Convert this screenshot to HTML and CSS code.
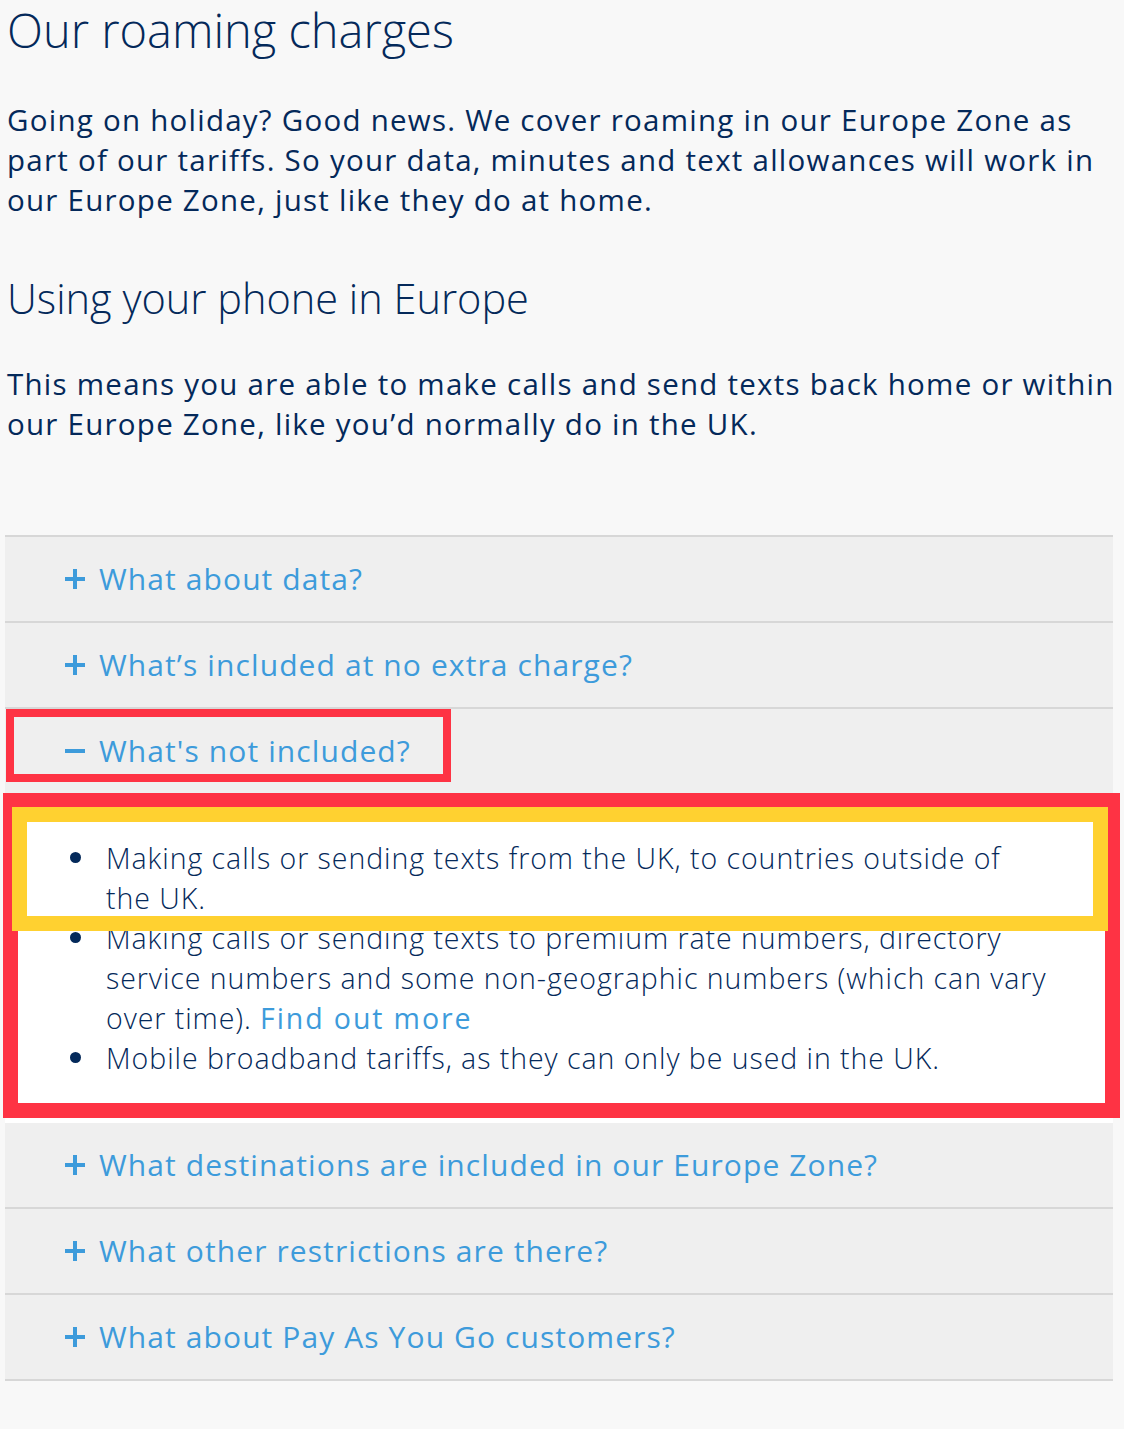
FILE: index.html
```html
<!DOCTYPE html>
<html lang="en">
<head>
<meta charset="utf-8">
<title>Our roaming charges</title>
<link rel="stylesheet" href="styles.css">
</head>
<body>
<main class="page">
  <h1 class="title">Our roaming charges</h1>
  <p class="lead">Going on holiday? Good news. We cover roaming in our Europe Zone as part of our tariffs. So your data, minutes and text allowances will work in our Europe Zone, just like they do at home.</p>
  <h2 class="subtitle">Using your phone in Europe</h2>
  <p class="lead lead-2">This means you are able to make calls and send texts back home or within our Europe Zone, like you’d normally do in the UK.</p>

  <section class="accordion">
    <div class="acc-item first">
      <div class="acc-head">
        <svg class="acc-icon" viewBox="0 0 20 20" aria-hidden="true"><path d="M10 0V20M0 10H20"/></svg>
        <span class="acc-title">What about data?</span>
      </div>
    </div>
    <div class="acc-item">
      <div class="acc-head">
        <svg class="acc-icon" viewBox="0 0 20 20" aria-hidden="true"><path d="M10 0V20M0 10H20"/></svg>
        <span class="acc-title">What’s included at no extra charge?</span>
      </div>
    </div>
    <div class="acc-item open">
      <div class="acc-head">
        <svg class="acc-icon" viewBox="0 0 20 20" aria-hidden="true"><path d="M0 10H20"/></svg>
        <span class="acc-title">What's not included?</span>
        <span class="mark mark-head"></span>
      </div>
      <div class="acc-panel">
        <ul class="acc-list">
          <li><span class="li-text">Making calls or sending texts from the UK, to countries outside of the UK.</span></li>
          <li><span class="li-text">Making calls or sending texts to premium rate numbers, directory service numbers and some non-geographic numbers (which can vary over time). <a class="link" href="#">Find out more</a></span></li>
          <li><span class="li-text">Mobile broadband tariffs, as they can only be used in the UK.</span></li>
        </ul>
        <span class="mark mark-panel"></span>
        <span class="mark mark-first"></span>
      </div>
    </div>
    <div class="acc-item">
      <div class="acc-head">
        <svg class="acc-icon" viewBox="0 0 20 20" aria-hidden="true"><path d="M10 0V20M0 10H20"/></svg>
        <span class="acc-title">What destinations are included in our Europe Zone?</span>
      </div>
    </div>
    <div class="acc-item">
      <div class="acc-head">
        <svg class="acc-icon" viewBox="0 0 20 20" aria-hidden="true"><path d="M10 0V20M0 10H20"/></svg>
        <span class="acc-title">What other restrictions are there?</span>
      </div>
    </div>
    <div class="acc-item">
      <div class="acc-head">
        <svg class="acc-icon" viewBox="0 0 20 20" aria-hidden="true"><path d="M10 0V20M0 10H20"/></svg>
        <span class="acc-title">What about Pay As You Go customers?</span>
      </div>
    </div>
  </section>
</main>
</body>
</html>
```

FILE: styles.css
```css
* { box-sizing: border-box; }

html, body {
  margin: 0;
  padding: 0;
  background: #f8f8f8;
}

body {
  font-family: "Open Sans", "Noto Sans", "DejaVu Sans", sans-serif;
  color: #04295a;
  width: 1124px;
  min-height: 1429px;
}

.page {
  padding: 0 11px 48px 5px;
}

.title {
  margin: 0;
  padding-left: 2px;
  font-size: 47px;
  font-weight: 300;
  line-height: 60px;
}

.lead {
  margin: 40px -11px 0 0;
  padding-left: 2px;
  font-size: 29.5px;
  font-weight: 400;
  letter-spacing: 1.25px;
  line-height: 40px;
}

.subtitle {
  margin: 50px 0 0;
  padding-left: 2px;
  font-size: 41.5px;
  font-weight: 300;
  line-height: 56px;
}

.lead-2 {
  margin-top: 38px;
}

.accordion {
  margin-top: 91px;
  width: 1108px;
  border-top: 2px solid #d7d7d7;
}

.acc-item {
  background: #efefef;
  border-bottom: 2px solid #d7d7d7;
}

.acc-head {
  position: relative;
  display: flex;
  align-items: center;
  height: 84px;
  padding-left: 60px;
  gap: 14px;
}

.acc-icon {
  width: 20px;
  height: 20px;
  flex: none;
  fill: none;
  stroke: #3d9bdb;
  stroke-width: 4;
}

.acc-title {
  font-size: 30px;
  letter-spacing: 1.1px;
  line-height: 40px;
  color: #3d9bdb;
}

.open .acc-head {
  border-bottom: 2px solid #d7d7d7;
  height: 86px;
}

.open {
  border-bottom: 0;
}

.acc-panel {
  position: relative;
  background: #ffffff;
  padding: 43px 66px 45px 65px;
}

.acc-list {
  list-style: none;
  margin: 0;
  padding: 0;
}

.acc-list li {
  display: flex;
  align-items: flex-start;
  gap: 25px;
  font-size: 28.5px;
  font-weight: 300;
  letter-spacing: 0.95px;
  line-height: 40px;
}

.acc-list li::before {
  content: "";
  flex: none;
  width: 11px;
  height: 11px;
  margin-top: 14px;
  border-radius: 50%;
  background: #04295a;
}

.li-text {
  flex: 1;
  min-width: 0;
}

.link {
  color: #3d9bdb;
  font-weight: 400;
  letter-spacing: 1.9px;
  text-decoration: none;
}

/* annotation overlays */
.mark {
  position: absolute;
  pointer-events: none;
}

.mark-head {
  left: 1px;
  top: 0;
  width: 445px;
  height: 73px;
  border: 8px solid #fe3344;
}

.mark-panel {
  left: -2px;
  top: -2px;
  width: 1117px;
  height: 325px;
  border: 15px solid #fe3344;
}

.mark-first {
  left: 7px;
  top: 12px;
  width: 1096px;
  height: 124px;
  border: 15px solid #ffd130;
}
```
